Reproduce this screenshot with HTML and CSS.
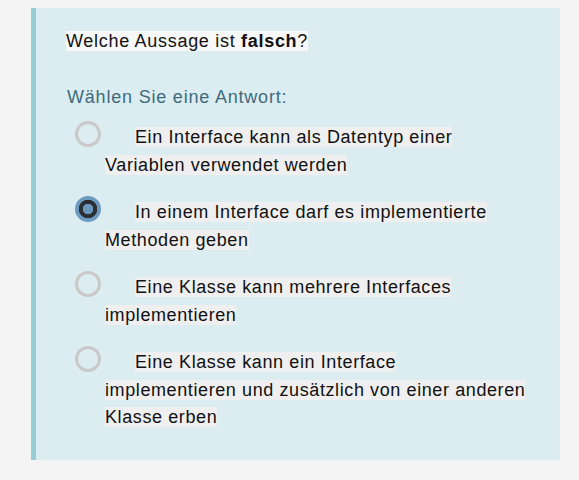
FILE: index.html
```html
<!DOCTYPE html>
<html lang="de">
<head>
<meta charset="utf-8">
<link rel="stylesheet" href="styles.css">
</head>
<body>
<div class="page">
  <div class="panel">
    <p class="question"><span class="hl">Welche Aussage ist <b>falsch</b>?</span></p>
    <p class="prompt">Wählen Sie eine Antwort:</p>
    <div class="answers">
      <div class="option">
        <span class="radio"></span>
        <div class="label"><span class="hl2">Ein Interface kann als Datentyp einer Variablen verwendet werden</span></div>
      </div>
      <div class="option">
        <span class="radio checked"></span>
        <div class="label"><span class="hl2">In einem Interface darf es implementierte Methoden geben</span></div>
      </div>
      <div class="option">
        <span class="radio"></span>
        <div class="label"><span class="hl2">Eine Klasse kann mehrere Interfaces implementieren</span></div>
      </div>
      <div class="option">
        <span class="radio"></span>
        <div class="label"><span class="hl2">Eine Klasse kann ein Interface implementieren und zusätzlich von einer anderen Klasse erben</span></div>
      </div>
    </div>
  </div>
</div>
</body>
</html>
```

FILE: styles.css
```css
html, body {
  margin: 0;
  padding: 0;
  background: #f4f4f4;
}
body {
  font-family: "Liberation Sans", Arial, sans-serif;
  color: #111;
}
.page {
  padding: 8px 19px 20px 31px;
}
.panel {
  background: #dcedf2;
  border-left: 5px solid #99cdd6;
  padding: 22px 29px 27px 30px;
  min-height: 403px;
}
.question {
  margin: 0;
  font-size: 18px;
  line-height: 22px;
  letter-spacing: 0.7px;
}
.hl {
  background: #f8f8f8;
}
.question b {
  font-weight: bold;
}
.prompt {
  margin: 34px 0 0 1px;
  font-size: 18px;
  line-height: 22px;
  color: #3e6b7b;
  letter-spacing: 0.8px;
}
.answers {
  margin-top: 16px;
  padding-left: 9px;
  display: flex;
  flex-direction: column;
  gap: 20px;
}
.option {
  display: flex;
  align-items: flex-start;
}
.radio {
  flex: none;
  box-sizing: border-box;
  width: 26px;
  height: 26px;
  border-radius: 50%;
  border: 3px solid #c9c9c9;
  margin-top: -3px;
}
.radio.checked {
  border: 3px solid #6e9ac0;
  background: radial-gradient(circle, #6b97bf 0 5px, #2b2f33 5.5px 9px, #6e9ac0 9.5px);
}
.label {
  margin-left: 4px;
  text-indent: 30px;
  font-size: 18px;
  line-height: 27.5px;
  letter-spacing: 0.6px;
  color: #111;
}
.hl2 {
  background: #efefef;
}
```
